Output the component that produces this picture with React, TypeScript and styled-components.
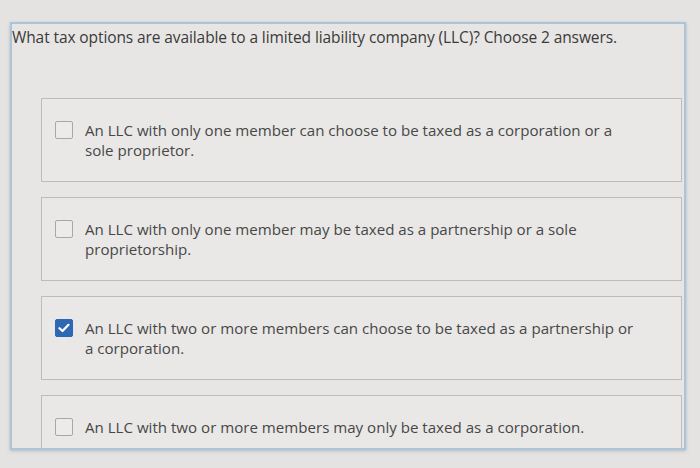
import styled, { createGlobalStyle } from "styled-components";

const GlobalStyle = createGlobalStyle`
  html, body {
    margin: 0;
    padding: 0;
    background: #e4e3e1;
  }
  body {
    font-family: "Open Sans", "Liberation Sans", sans-serif;
    color: #444;
  }
`;

const Page = styled.div`
  width: 700px;
  height: 468px;
  padding: 22px 14px 0 10px;
  box-sizing: border-box;
  overflow: hidden;
`;

const Panel = styled.div`
  height: 428px;
  box-sizing: border-box;
  border: 2px solid #adc3d6;
  background: #e7e6e4;
  box-shadow: 0 1px 3px rgba(120, 150, 180, 0.5);
  overflow: hidden;
`;

const Question = styled.p`
  margin: 0;
  padding: 2px 0 0 0;
  font-size: 15.5px;
  line-height: 22px;
  color: #3a3a3a;
  letter-spacing: -0.1px;
`;

const OptionList = styled.div`
  display: flex;
  flex-direction: column;
  gap: 15px;
  margin: 50px 2px 0 29px;
`;

const Option = styled.label`
  display: flex;
  align-items: flex-start;
  gap: 12px;
  padding: 21px 14px 21px 13px;
  min-height: 40px;
  border: 1px solid #bdbcba;
  background: #e9e8e6;
`;

const Box = styled.span<{ $checked?: boolean }>`
  flex: none;
  width: 18px;
  height: 18px;
  margin-top: 1px;
  box-sizing: border-box;
  border-radius: 2px;
  border: 1px solid ${(p) => (p.$checked ? "#2e67b3" : "#a9a8a6")};
  background: ${(p) => (p.$checked ? "#2e67b3" : "#ecebe9")};
  display: flex;
  align-items: center;
  justify-content: center;
`;

const OptionText = styled.span`
  font-size: 15.1px;
  line-height: 20px;
  color: #474747;
  max-width: 556px;
`;

const options = [
  {
    text: "An LLC with only one member can choose to be taxed as a corporation or a sole proprietor.",
    checked: false,
  },
  {
    text: "An LLC with only one member may be taxed as a partnership or a sole proprietorship.",
    checked: false,
  },
  {
    text: "An LLC with two or more members can choose to be taxed as a partnership or a corporation.",
    checked: true,
  },
  {
    text: "An LLC with two or more members may only be taxed as a corporation.",
    checked: false,
  },
];

export default function App() {
  return (
    <Page>
      <GlobalStyle />
      <Panel>
        <Question>
          What tax options are available to a limited liability company (LLC)? Choose 2 answers.
        </Question>
        <OptionList>
          {options.map((o, i) => (
            <Option key={i}>
              <Box $checked={o.checked}>
                {o.checked && (
                  <svg width="12" height="10" viewBox="0 0 12 10">
                    <path d="M1.5 5.2 L4.5 8 L10.5 1.8" fill="none" stroke="#fff" strokeWidth="2.2" strokeLinecap="round" strokeLinejoin="round" />
                  </svg>
                )}
              </Box>
              <OptionText>{o.text}</OptionText>
            </Option>
          ))}
        </OptionList>
      </Panel>
    </Page>
  );
}
